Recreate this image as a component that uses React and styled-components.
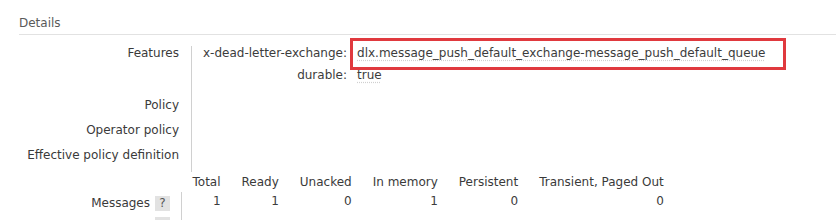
import React from "react";
import styled, { createGlobalStyle } from "styled-components";

const GlobalStyle = createGlobalStyle`
  html, body {
    margin: 0;
    padding: 0;
    background: #ffffff;
    overflow: hidden;
  }
  body {
    font-family: "DejaVu Sans", Verdana, sans-serif;
    font-size: 12px;
    color: #3c3c3c;
  }
`;

const Section = styled.section`
  padding: 16px 0 0 19px;
`;

const Heading = styled.h2`
  margin: 0;
  font-size: 12px;
  font-weight: normal;
  line-height: 15px;
  color: #5a5a5a;
  padding-bottom: 3px;
  border-bottom: 1px solid #e2e2e2;
`;

const Facts = styled.div`
  display: grid;
  grid-template-columns: 173px auto;
  justify-content: start;
  margin-top: 5px;
`;

const FactLabel = styled.div`
  text-align: right;
  line-height: 15px;
  padding: ${(p) => (p.$first ? "0" : "5px")} 12px ${(p) => (p.$last ? "9px" : "5px")} 0;
  margin-top: ${(p) => (p.$first ? "6px" : "0")};
  border-right: 1px solid #d0d0d0;
  color: #3a3a3a;
  white-space: nowrap;
`;

const FactValue = styled.div`
  line-height: 15px;
  padding: ${(p) => (p.$first ? "6px 0 10px" : "5px 0")} 11px;
`;

const Mini = styled.div`
  display: grid;
  grid-template-columns: auto auto;
  column-gap: 10px;
  row-gap: 7px;
  justify-content: start;
`;

const MiniKey = styled.div`
  text-align: right;
  white-space: nowrap;
`;

const MiniVal = styled.span`
  position: relative;
  white-space: nowrap;
  justify-self: start;
  text-decoration: underline dotted #d0d0d0;
  text-underline-offset: 3px;
`;

const Highlight = styled.span`
  position: absolute;
  left: -7px;
  right: -20px;
  top: -8px;
  bottom: -9px;
  border: 3px solid #e0393e;
  pointer-events: none;
`;

const Stats = styled.div`
  display: grid;
  grid-template-columns: 163px repeat(6, auto);
  justify-content: start;
`;

const StatHead = styled.div`
  text-align: right;
  line-height: 15px;
  padding: 3px 10.5px 2px;
  white-space: nowrap;
  color: #3a3a3a;
`;

const Blank = styled.div``;

const StatLabel = styled.div`
  display: flex;
  justify-content: flex-end;
  align-items: center;
  gap: 5px;
  padding: 4px 11px 2px 0;
  border-right: 1px solid #d0d0d0;
  line-height: 15px;
  color: #3a3a3a;
  white-space: nowrap;
`;

const Help = styled.span`
  display: inline-block;
  width: 15px;
  height: 15px;
  line-height: 15px;
  text-align: center;
  background: #e2e2e2;
  color: #555;
  font-size: 12px;
`;

const StatCell = styled.div`
  text-align: right;
  line-height: 15px;
  padding: 2px 10.5px 0;
`;

const facts = [
  { label: "Policy" },
  { label: "Operator policy" },
  { label: "Effective policy definition", last: true },
];

const heads = ["Total", "Ready", "Unacked", "In memory", "Persistent", "Transient, Paged Out"];
const rows = [
  { label: "Messages", help: "?", values: ["1", "1", "0", "1", "0", "0"] },
  { label: "", help: "", values: ["", "", "", "", "", ""] },
];

export default function App() {
  return (
    <>
      <GlobalStyle />
      <Section>
        <Heading>Details</Heading>
        <Facts>
          <FactLabel $first>Features</FactLabel>
          <FactValue $first>
            <Mini>
              <MiniKey>x-dead-letter-exchange:</MiniKey>
              <MiniVal>
                dlx.message_push_default_exchange-message_push_default_queue
                <Highlight />
              </MiniVal>
              <MiniKey>durable:</MiniKey>
              <MiniVal>true</MiniVal>
            </Mini>
          </FactValue>
          {facts.map((f) => (
            <React.Fragment key={f.label}>
              <FactLabel $last={f.last}>{f.label}</FactLabel>
              <FactValue />
            </React.Fragment>
          ))}
        </Facts>
        <Stats>
          <Blank />
          {heads.map((h) => (
            <StatHead key={h}>{h}</StatHead>
          ))}
          {rows.map((r, ri) => (
            <React.Fragment key={ri}>
              <StatLabel>
                {r.label}
                <Help>{r.help}</Help>
              </StatLabel>
              {r.values.map((v, i) => (
                <StatCell key={i}>{v}</StatCell>
              ))}
            </React.Fragment>
          ))}
        </Stats>
      </Section>
    </>
  );
}
